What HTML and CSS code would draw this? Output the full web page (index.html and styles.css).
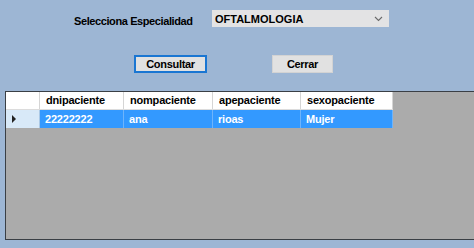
FILE: index.html
```html
<!DOCTYPE html>
<html>
<head>
<meta charset="utf-8">
<link rel="stylesheet" href="styles.css">
</head>
<body>
<div class="form">
  <div class="top-row">
    <span class="label">Selecciona Especialidad</span>
    <div class="combo">
      <span class="combo-text">OFTALMOLOGIA</span>
      <svg class="chev" width="9" height="6" viewBox="0 0 9 6"><path d="M1 1 L4.5 4.5 L8 1" fill="none" stroke="#6a6a6a" stroke-width="1.1"/></svg>
    </div>
  </div>
  <div class="btn-row">
    <button class="btn btn-focus">Consultar</button>
    <button class="btn btn-close">Cerrar</button>
  </div>
  <div class="grid">
    <div class="grow head">
      <div class="rh"></div>
      <div class="cell c1">dnipaciente</div>
      <div class="cell c2">nompaciente</div>
      <div class="cell c3">apepaciente</div>
      <div class="cell c4">sexopaciente</div>
    </div>
    <div class="grow data">
      <div class="rh rh-sel"><svg width="5" height="8" viewBox="0 0 5 8"><path d="M0 0 L4 4 L0 8 Z" fill="#222"/></svg></div>
      <div class="cell c1">22222222</div>
      <div class="cell c2">ana</div>
      <div class="cell c3">rioas</div>
      <div class="cell c4">Mujer</div>
    </div>
  </div>
</div>
</body>
</html>
```

FILE: styles.css
```css
html, body {
  margin: 0;
  padding: 0;
}
body {
  width: 474px;
  height: 248px;
  overflow: hidden;
  background: #9db6d4;
  font-family: "Liberation Sans", Arial, sans-serif;
  font-weight: bold;
  font-size: 11px;
  color: #000;
}
.form {
  display: flex;
  flex-direction: column;
}
.top-row {
  display: flex;
  align-items: flex-start;
  padding-top: 10px;
  padding-left: 74px;
  height: 18px;
}
.label {
  width: 138px;
  margin-top: 5px;
  line-height: 13px;
  letter-spacing: -0.4px;
}
.combo {
  width: 177px;
  height: 17px;
  background: #e3e3e4;
  display: flex;
  align-items: center;
  justify-content: space-between;
  box-sizing: border-box;
  padding: 0 6px 0 3px;
}
.combo-text {
  line-height: 13px;
  padding-top: 1px;
}
.chev {
  display: block;
}
.btn-row {
  display: flex;
  padding-left: 134px;
  margin-top: 27px;
  height: 18px;
}
.btn {
  font-family: "Liberation Sans", Arial, sans-serif;
  font-weight: bold;
  font-size: 11px;
  letter-spacing: -0.3px;
  color: #000;
  height: 18px;
  background: #e1e1e1;
  padding: 0;
  margin: 0;
  box-sizing: border-box;
  line-height: 14px;
}
.btn-focus {
  width: 73px;
  border: 2px solid #1a76d2;
}
.btn-close {
  width: 61px;
  margin-left: 65px;
  border: 1px solid #d3d3d3;
}
.grid {
  margin-top: 18px;
  margin-left: 5px;
  width: 480px;
  height: 149px;
  box-sizing: border-box;
  border: 1px solid #3a3f45;
  border-right: none;
  background: #ababab;
}
.grow {
  display: flex;
  height: 17px;
}
.grow.head {
  background: #fff;
  width: 387px;
  border-bottom: 1px solid #dcdcdc;
}
.grow.data {
  width: 387px;
  height: 18px;
  background: #3399ff;
  color: #fff;
}
.rh {
  width: 34px;
  flex: none;
  box-sizing: border-box;
  border-right: 1px solid #d5d5d5;
}
.rh-sel {
  background: #d8e9f8;
  display: flex;
  align-items: center;
  padding-left: 6px;
  border-right: 1px solid #a9c8e6;
}
.cell {
  flex: none;
  box-sizing: border-box;
  padding-left: 6px;
  line-height: 17px;
  border-right: 1px solid #d5d5d5;
  letter-spacing: -0.2px;
}
.data .cell {
  border-right: 1px solid #6eb4fb;
  line-height: 18px;
  padding-left: 5px;
}
.c1 { width: 84px; }
.c2 { width: 89px; }
.c3 { width: 88px; }
.c4 { width: 92px; }
```
